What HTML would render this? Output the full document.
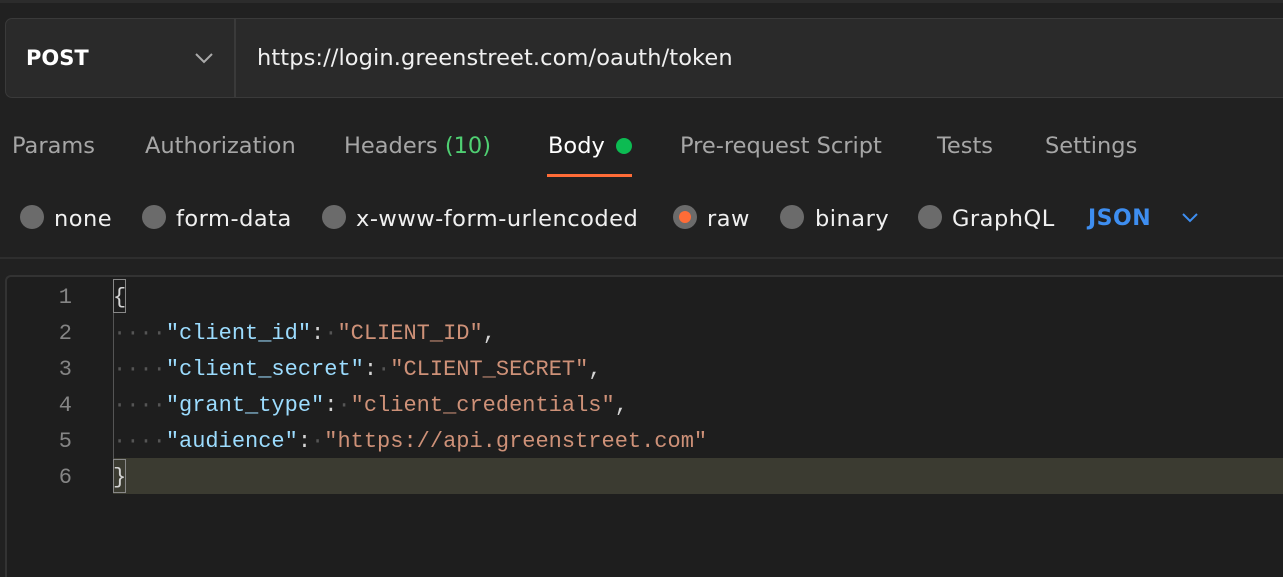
<!DOCTYPE html>
<html><head><style>
body{margin:0;width:1283px;height:566px;background:#212121;overflow:hidden;font-family:"DejaVu Sans","Liberation Sans",sans-serif;position:relative}
.a{position:absolute;white-space:nowrap}
.bar{left:5px;top:18px;width:1290px;height:78px;background:#2a2a2a;border:1px solid #3a3a3a;border-radius:7px}
.tab{top:133px;font-size:22.5px;color:#a6a6a6}
.r{top:206px;font-size:22.5px;color:#f0f0f0;letter-spacing:0.5px}
.dot{width:24px;height:24px;border-radius:50%;background:#6b6b6b;top:205px}
.code{font-family:"Liberation Mono",monospace;font-size:22px;line-height:36px}
.k{color:#9cdcfe}.s{color:#ce9178}.p{color:#d4d4d4}.w{color:#555}
.ln{left:20px;width:52px;text-align:right;color:#858585}
</style></head><body>
<div class="a" style="left:0;top:0;width:1283px;height:3px;background:#2c2c2c"></div>
<div class="a bar"></div>
<div class="a" style="left:234px;top:19px;width:2px;height:78px;background:#3a3a3a"></div>
<div class="a" style="left:26px;top:46px;font-size:21px;font-weight:bold;color:#fff">POST</div>
<svg class="a" style="left:194px;top:52px" width="20" height="12"><path d="M2 2L10 10L18 2" stroke="#aaa" stroke-width="2" fill="none"/></svg>
<div class="a" style="left:257px;top:45px;font-size:22.5px;color:#f0f0f0;letter-spacing:0.1px">https://login.greenstreet.com/oauth/token</div>

<div class="a tab" style="left:12px">Params</div>
<div class="a tab" style="left:145px">Authorization</div>
<div class="a tab" style="left:344px">Headers <span style="color:#4fcf72">(10)</span></div>
<div class="a tab" style="left:548px;color:#fff">Body</div>
<div class="a" style="left:616px;top:138px;width:16px;height:16px;border-radius:50%;background:#0cbb52"></div>
<div class="a" style="left:547px;top:174px;width:85px;height:3px;background:#ff6c37"></div>
<div class="a tab" style="left:680px">Pre-request Script</div>
<div class="a tab" style="left:937px">Tests</div>
<div class="a tab" style="left:1045px">Settings</div>

<div class="a dot" style="left:20px"></div><div class="a r" style="left:54px">none</div>
<div class="a dot" style="left:142px"></div><div class="a r" style="left:176px">form-data</div>
<div class="a dot" style="left:322px"></div><div class="a r" style="left:356px">x-www-form-urlencoded</div>
<div class="a dot" style="left:673px"></div><div class="a" style="left:679px;top:211px;width:12px;height:12px;border-radius:50%;background:#ff6c37"></div><div class="a r" style="left:707px">raw</div>
<div class="a dot" style="left:780px"></div><div class="a r" style="left:815px">binary</div>
<div class="a dot" style="left:918px"></div><div class="a r" style="left:952px">GraphQL</div>
<div class="a" style="left:1088px;top:206px;font-size:22px;font-weight:bold;color:#3e8ef0;letter-spacing:0.5px">JSON</div>
<svg class="a" style="left:1181px;top:212px" width="18" height="12"><path d="M2 2L9 9L16 2" stroke="#3e8ef0" stroke-width="2" fill="none"/></svg>

<div class="a" style="left:0;top:257px;width:1283px;height:2px;background:#2e2e2e"></div>
<div class="a" style="left:5px;top:275px;width:1290px;height:300px;background:#1e1e1e;border-top:2px solid #333;border-left:2px solid #333;border-radius:6px 0 0 0"></div>
<div class="a" style="left:113px;top:458px;width:1170px;height:36px;background:#3b3b31"></div>
<div class="a" style="left:113px;top:296px;width:1px;height:180px;background:#555"></div>
<div class="a" style="left:113px;top:279px;width:11px;height:32px;border:1px solid #888"></div>
<div class="a" style="left:113px;top:459px;width:11px;height:32px;border:1px solid #888"></div>
<div class="a code" style="top:280px;left:0">
<div class="a ln" style="top:0">1</div>
<div class="a ln" style="top:36px">2</div>
<div class="a ln" style="top:72px">3</div>
<div class="a ln" style="top:108px">4</div>
<div class="a ln" style="top:144px">5</div>
<div class="a ln" style="top:180px">6</div>
<div class="a" style="left:113px;top:0"><span class="p">{</span></div>
<div class="a" style="left:113px;top:36px"><span class="w">····</span><span class="k">"client_id"</span><span class="p">:</span><span class="w">·</span><span class="s">"CLIENT_ID"</span><span class="p">,</span></div>
<div class="a" style="left:113px;top:72px"><span class="w">····</span><span class="k">"client_secret"</span><span class="p">:</span><span class="w">·</span><span class="s">"CLIENT_SECRET"</span><span class="p">,</span></div>
<div class="a" style="left:113px;top:108px"><span class="w">····</span><span class="k">"grant_type"</span><span class="p">:</span><span class="w">·</span><span class="s">"client_credentials"</span><span class="p">,</span></div>
<div class="a" style="left:113px;top:144px"><span class="w">····</span><span class="k">"audience"</span><span class="p">:</span><span class="w">·</span><span class="s">"https://api.greenstreet.com"</span></div>
<div class="a" style="left:113px;top:180px"><span class="p">}</span></div>
</div>
</body></html>
